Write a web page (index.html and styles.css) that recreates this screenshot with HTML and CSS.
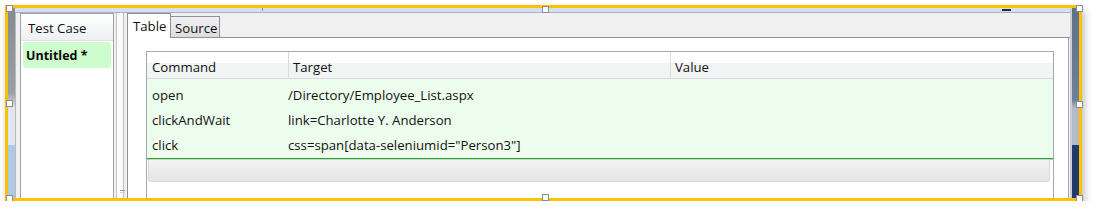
FILE: index.html
```html
<!DOCTYPE html>
<html>
<head>
<meta charset="utf-8">
<link rel="stylesheet" href="styles.css">
</head>
<body>
<div class="page">
  <div class="frame">
    <div class="win-left"></div>
    <div class="win-main">
      <div class="win-top"><span class="tick"></span><span class="dash"></span></div>
      <div class="app">
        <div class="tc-panel">
          <div class="tc-head">Test Case</div>
          <div class="tc-item">Untitled *</div>
        </div>
        <div class="splitter"><div class="split-track"><span class="grip"></span></div></div>
        <div class="editor">
          <div class="tabs">
            <div class="tab tab-active">Table</div>
            <div class="tab tab-idle">Source</div>
          </div>
          <div class="tab-body">
            <div class="grid">
              <div class="grid-head">
                <div class="hcell hc-cmd">Command</div>
                <div class="hcell hc-target">Target</div>
                <div class="hcell hc-value">Value</div>
              </div>
              <div class="grid-rows">
                <div class="row"><div class="c-cmd">open</div><div class="c-target">/Directory/Employee_List.aspx</div><div class="c-value"></div></div>
                <div class="row"><div class="c-cmd">clickAndWait</div><div class="c-target">link=Charlotte Y. Anderson</div><div class="c-value"></div></div>
                <div class="row"><div class="c-cmd">click</div><div class="c-target">css=span[data-seleniumid="Person3"]</div><div class="c-value"></div></div>
              </div>
              <div class="grid-bar"></div>
            </div>
          </div>
        </div>
      </div>
    </div>
    <div class="win-right"></div>

    <span class="handle h-tl"></span>
    <span class="handle h-tm"></span>
    <span class="handle h-tr"></span>
    <span class="handle h-ml"></span>
    <span class="handle h-mr"></span>
    <span class="handle h-bl"></span>
    <span class="handle h-bm"></span>
    <span class="handle h-br"></span>
  </div>
</div>
</body>
</html>
```

FILE: styles.css
```css
html, body {
  margin: 0;
  background: #ffffff;
}
body {
  font-family: "Open Sans", "Noto Sans", sans-serif;
  font-size: 13.2px;
  color: #111111;
}
.page {
  padding: 5px 0 0 5px;
}
.frame {
  position: relative;
  width: 1077px;
  height: 196px;
  box-sizing: border-box;
  border: 3px solid #ffc000;
  box-shadow: 2px 5px 8px rgba(0, 0, 0, 0.28);
  display: flex;
}
.win-left {
  width: 7px;
  background: linear-gradient(to bottom, #868b93 0, #9aa0a8 85px, #dde6f1 100px, #dde6f1 137px, #aec8e6 137px, #aec8e6 100%);
}
.win-main {
  width: 1055px;
  display: flex;
  flex-direction: column;
  background: #f0f0f0;
}
.win-right {
  width: 9px;
  box-sizing: border-box;
  border-left: 2px solid #c9ced6;
  background: linear-gradient(to bottom, #5f708a 0, #6f809a 92px, #b2bac7 100px, #b2bac7 137px, #1f3b6b 137px, #1f3b6b 100%);
}
.win-top {
  height: 4px;
  background: #d8def0;
  border-bottom: 1px solid #aab1c3;
  display: flex;
  align-items: flex-start;
}
.tick {
  margin-left: 247px;
  width: 1px;
  height: 3px;
  background: #8a8f99;
}
.dash {
  margin-left: 739px;
  margin-top: 1px;
  width: 9px;
  height: 2px;
  background: #2a2a2a;
}
.app {
  flex: 1;
  display: flex;
  border-left: 1px solid #b9b9b9;
  padding-left: 4px;
}
.tc-panel {
  width: 92px;
  border: 1px solid #a0a2a6;
  border-bottom: 0;
  background: #ffffff;
}
.tc-head {
  height: 26px;
  line-height: 29px;
  padding-left: 7px;
  background: linear-gradient(to bottom, #ffffff, #eef0f3);
  border-bottom: 1px solid #e0e2e6;
}
.tc-item {
  margin: 1px 2px 0 2px;
  height: 26px;
  line-height: 27px;
  padding-left: 3px;
  background: #cdfccd;
  border-radius: 3px;
  font-weight: bold;
  font-size: 12.5px;
  color: #0a0a0a;
}
.splitter {
  width: 13px;
  padding-left: 2px;
  box-sizing: border-box;
  display: flex;
}
.split-track {
  width: 6px;
  border-left: 1px solid #c2c2c2;
  border-right: 1px solid #bdbdbd;
  background: #fbfbfb;
  display: flex;
  flex-direction: column;
  justify-content: flex-end;
  align-items: center;
}
.grip {
  width: 5px;
  height: 1px;
  margin-bottom: 5px;
  margin-left: 4px;
  border-top: 1px solid #9a9a9a;
  border-bottom: 1px solid #cfcfcf;
}
.editor {
  width: 943px;
  display: flex;
  flex-direction: column;
}
.tabs {
  height: 24px;
  display: flex;
  align-items: flex-end;
  border-bottom: 1px solid #8f9399;
}
.tab {
  box-sizing: border-box;
  border: 1px solid #8c9097;
  border-bottom: 0;
  padding-left: 5px;
}
.tab-active {
  width: 44px;
  height: 25px;
  line-height: 24px;
  margin-bottom: -1px;
  background: #ffffff;
  position: relative;
  z-index: 1;
}
.tab-idle {
  width: 50px;
  height: 21px;
  line-height: 22px;
  margin-left: -1px;
  padding-left: 4px;
  background: linear-gradient(to bottom, #f2f2f2, #dcdcdc);
}
.tab-body {
  flex: 1;
  margin-right: 1px;
  background: #ffffff;
  border-left: 1px solid #8f9399;
  border-right: 1px solid #a4a7ac;
  padding: 13px 14px 0 18px;
  display: flex;
  flex-direction: column;
}
.grid {
  flex: 1;
  border: 1px solid #a4a7ac;
  border-bottom: 0;
  display: flex;
  flex-direction: column;
}
.grid-head {
  height: 26px;
  display: grid;
  grid-template-columns: 141px 382px 1fr;
  background: linear-gradient(to bottom, #ffffff 0, #ffffff 40%, #f2f3f5 42%, #f2f3f5 100%);
  border-bottom: 1px solid #d9dadd;
}
.hcell {
  line-height: 30px;
  padding-left: 5px;
}
.hc-target, .hc-value {
  border-left: 1px solid #dcdde0;
  padding-left: 4px;
}
.grid-rows {
  background: #edfded;
  padding-top: 4px;
  border-bottom: 1px solid #389a38;
  box-shadow: 0 1px 0 #b9dcb9;
}
.row {
  height: 25px;
  line-height: 25px;
  display: grid;
  grid-template-columns: 141px 382px 1fr;
}
.c-cmd {
  padding-left: 5px;
}
.grid-bar {
  height: 22px;
  box-sizing: border-box;
  margin: 1px 3px 0 1px;
  border: 1px solid #d8d8d8;
  border-top: 0;
  border-radius: 0 0 3px 3px;
  background: linear-gradient(to bottom, #f3f3f3, #e5e5e5);
}
.handle {
  position: absolute;
  width: 7px;
  height: 7px;
  box-sizing: border-box;
  background: #ffffff;
  border: 1px solid #8d8d8d;
  z-index: 5;
}
.h-tl { left: -2px; top: -3px; }
.h-tm { left: 534px; top: -2px; }
.h-tr { left: 1068px; top: -3px; }
.h-ml { left: -2px; top: 92px; }
.h-mr { left: 1068px; top: 93px; }
.h-bl { left: -2px; top: 187px; }
.h-bm { left: 534px; top: 186px; }
.h-br { left: 1068px; top: 187px; }
```
